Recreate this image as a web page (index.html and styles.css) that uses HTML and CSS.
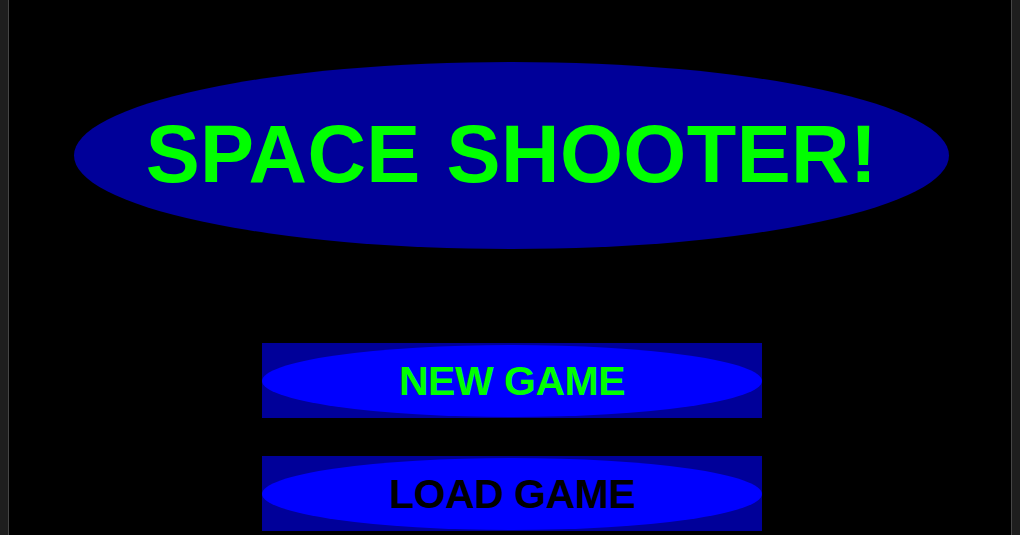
FILE: index.html
```html
<!DOCTYPE html>
<html lang="en">
<head>
<meta charset="utf-8">
<title>Space Shooter!</title>
<link rel="stylesheet" href="styles.css">
</head>
<body>
<div class="frame">
  <div class="side side-left"></div>
  <main class="stage">
    <div class="title-oval">
      <h1 class="title">SPACE SHOOTER!</h1>
    </div>
    <div class="menu">
      <button class="menu-btn">
        <span class="btn-oval"><span class="btn-label label-green">NEW GAME</span></span>
      </button>
      <button class="menu-btn">
        <span class="btn-oval"><span class="btn-label label-black">LOAD GAME</span></span>
      </button>
    </div>
  </main>
  <div class="side side-right"></div>
</div>
</body>
</html>
```

FILE: styles.css
```css
html, body {
  margin: 0;
  padding: 0;
  background: #000;
  width: 1020px;
  height: 535px;
  overflow: hidden;
}

.frame {
  display: flex;
  width: 1020px;
  height: 535px;
}

.side {
  width: 8px;
  background: #1e1e1e;
  flex: none;
}

.side-left {
  border-right: 1px solid #464646;
  box-shadow: 1px 0 0 #222;
}

.side-right {
  border-left: 1px solid #464646;
}

.stage {
  flex: 1;
  background: #000;
  display: flex;
  flex-direction: column;
  font-family: "Liberation Sans", Arial, sans-serif;
  font-weight: bold;
}

.title-oval {
  width: 875px;
  height: 187px;
  margin-top: 62px;
  margin-left: 65px;
  background: #000099;
  border-radius: 50%;
  display: flex;
  align-items: center;
  justify-content: center;
}

.title {
  margin: 0;
  padding-left: 0;
  padding-bottom: 2px;
  font-size: 81px;
  line-height: 1;
  color: #00ff00;
  font-weight: bold;
  letter-spacing: 0.4px;
  word-spacing: 3px;
}

.menu {
  display: flex;
  flex-direction: column;
  gap: 38px;
  margin-top: 94px;
  margin-left: 253px;
}

.menu-btn {
  width: 500px;
  height: 75px;
  padding: 0;
  margin: 0;
  border: 0;
  background: #000099;
  display: flex;
  align-items: center;
  justify-content: center;
  font: inherit;
  cursor: pointer;
}

.btn-oval {
  width: 500px;
  height: 72px;
  background: #0000ff;
  border-radius: 50%;
  display: flex;
  align-items: center;
  justify-content: center;
}

.btn-label {
  font-size: 41px;
  line-height: 1;
  font-weight: bold;
  letter-spacing: -0.5px;
  padding-top: 2px;
}

.label-green {
  color: #00ff00;
}

.label-black {
  color: #000;
}
```
